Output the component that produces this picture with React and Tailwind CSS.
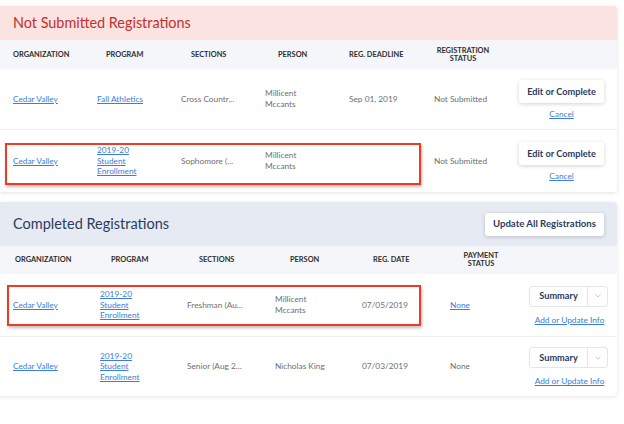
import React from "react";

const F = { fontFamily: "Lato, 'Open Sans', sans-serif" };

function Link({ children }) {
  return <span className="text-[#3b7ddd] underline decoration-[#3b7ddd]">{children}</span>;
}

function Btn({ children, className = "" }) {
  return (
    <div
      className={
        "flex items-center justify-center rounded-[3px] bg-white font-bold text-[#2b3a5e] shadow-[0_1px_4px_rgba(0,0,0,0.18)] " +
        className
      }
    >
      {children}
    </div>
  );
}

function Highlight({ className }) {
  return (
    <div
      className={
        "pointer-events-none absolute border-2 border-[#ef3b24] shadow-[1px_2px_3px_rgba(0,0,0,0.25)] " + className
      }
    />
  );
}

const cols1 = "grid grid-cols-[97px_84px_84px_84px_85px_85px_1fr] items-center";
const cols2 = "grid grid-cols-[100px_87px_88px_87px_88px_79px_1fr] items-center";

function EditActions() {
  return (
    <div className="flex w-[85px] flex-col items-center pt-[3px]">
      <Btn className="h-[23px] w-[85px] text-[9.2px]">Edit or Complete</Btn>
      <div className="mt-[5px]"><Link>Cancel</Link></div>
    </div>
  );
}

export default function App() {
  return (
    <div className="min-h-[424px] w-[624px] bg-white pt-[6px] text-[8.3px] text-[#6f6f6f]" style={F}>
      {/* Not Submitted */}
      <div className="w-[617px] overflow-hidden rounded-r-[4px] bg-white shadow-[0_1px_4px_rgba(0,0,0,0.12)]">
        <div className="flex h-[34px] items-center bg-[#fbe3e1] pl-[13px] text-[14.4px] text-[#c4302b]">
          Not Submitted Registrations
        </div>
        <div className={cols1 + " h-[29px] bg-[#f4f6f9] text-[7.4px] font-bold leading-[8px] text-[#2f2f2f]"}>
          <div className="pl-[13px]">ORGANIZATION</div>
          <div className="pl-[9px]">PROGRAM</div>
          <div className="pl-[10px]">SECTIONS</div>
          <div className="pl-[13px]">PERSON</div>
          <div>REG. DEADLINE</div>
          <div className="w-[58px] text-center">REGISTRATION<br />STATUS</div>
          <div />
        </div>
        <div className={cols1 + " h-[61px] border-b border-[#eeeeee]"}>
          <div className="pl-[13px]"><Link>Cedar Valley</Link></div>
          <div><Link>Fall Athletics</Link></div>
          <div>Cross Countr...</div>
          <div className="leading-[11px]">Millicent<br />Mccants</div>
          <div>Sep 01, 2019</div>
          <div>Not Submitted</div>
          <EditActions />
        </div>
        <div className={cols1 + " relative h-[62px]"}>
          <Highlight className="left-[5px] top-[13px] h-[42px] w-[416px]" />
          <div className="pl-[13px]"><Link>Cedar Valley</Link></div>
          <div className="leading-[10.5px]">
            <Link>2019-20</Link><br /><Link>Student</Link><br /><Link>Enrollment</Link>
          </div>
          <div>Sophomore (...</div>
          <div className="leading-[11px]">Millicent<br />Mccants</div>
          <div />
          <div>Not Submitted</div>
          <EditActions />
        </div>
      </div>

      {/* Completed */}
      <div className="mt-[10px] w-[617px] overflow-hidden rounded-r-[4px] bg-white shadow-[0_1px_4px_rgba(0,0,0,0.10)]">
        <div className="flex h-[44px] items-center justify-between bg-[#e6eaf2] pl-[13px] pr-[13px] text-[14.5px] text-[#2e3c5c]">
          <span>Completed Registrations</span>
          <Btn className="h-[23px] w-[119px] text-[9.6px]">Update All Registrations</Btn>
        </div>
        <div className={cols2 + " h-[28px] bg-[#f4f6f9] text-[7.4px] font-bold leading-[8px] text-[#2f2f2f]"}>
          <div className="pl-[15px]">ORGANIZATION</div>
          <div className="pl-[11px]">PROGRAM</div>
          <div className="pl-[12px]">SECTIONS</div>
          <div className="pl-[15px]">PERSON</div>
          <div className="pl-[11px]">REG. DATE</div>
          <div className="pl-[13px]"><div className="w-[36px] text-center">PAYMENT<br />STATUS</div></div>
          <div />
        </div>
        <div className={cols2 + " relative h-[63px] border-b border-[#eeeeee]"}>
          <Highlight className="left-[7px] top-[11px] h-[41px] w-[414px]" />
          <div className="pl-[13px]"><Link>Cedar Valley</Link></div>
          <div className="leading-[10.5px]">
            <Link>2019-20</Link><br /><Link>Student</Link><br /><Link>Enrollment</Link>
          </div>
          <div>Freshman (Au...</div>
          <div className="leading-[11px]">Millicent<br />Mccants</div>
          <div>07/05/2019</div>
          <div><Link>None</Link></div>
          <Actions />
        </div>
        <div className={cols2 + " h-[59px]"}>
          <div className="pl-[13px]"><Link>Cedar Valley</Link></div>
          <div className="leading-[10.5px]">
            <Link>2019-20</Link><br /><Link>Student</Link><br /><Link>Enrollment</Link>
          </div>
          <div>Senior (Aug 2...</div>
          <div>Nicholas King</div>
          <div>07/03/2019</div>
          <div>None</div>
          <Actions />
        </div>
      </div>
    </div>
  );
}

function Actions() {
  return (
    <div className="flex w-[79px] flex-col items-center pt-[2px]">
      <div className="flex h-[21px] w-[79px] rounded-[3px] border border-[#e3e6ea] bg-white">
        <div className="flex w-[58px] items-center justify-center border-r border-[#e3e6ea] text-[9.2px] font-bold text-[#2b3a5e]">
          Summary
        </div>
        <div className="flex flex-1 items-center justify-center">
          <svg width="6" height="4" viewBox="0 0 6 4" fill="none">
            <path d="M0.5 0.5L3 3L5.5 0.5" stroke="#b9bec6" strokeWidth="0.8" />
          </svg>
        </div>
      </div>
      <div className="ml-[2px] mt-[7px] whitespace-nowrap"><Link>Add or Update Info</Link></div>
    </div>
  );
}
